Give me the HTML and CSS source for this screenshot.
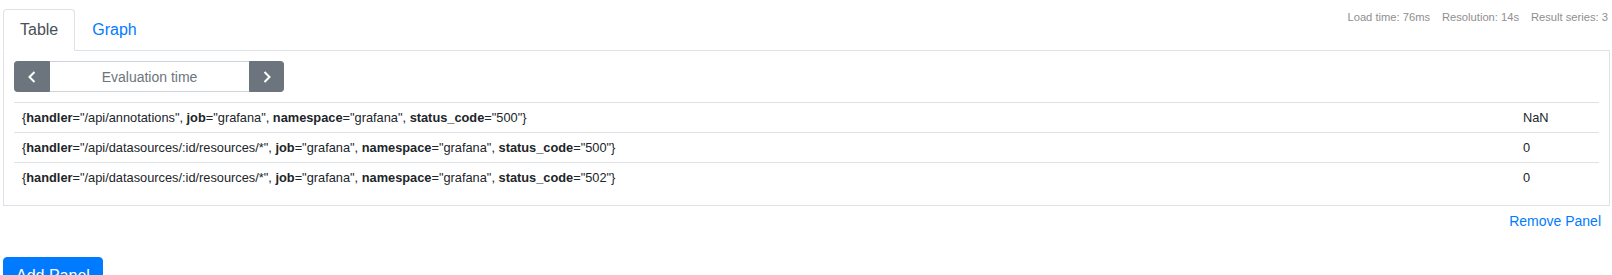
FILE: index.html
```html
<!DOCTYPE html>
<html lang="en">
<head>
    <meta charset="UTF-8" />
    <meta name="viewport" content="width=device-width, initial-scale=1.0"/>
    <title>Prometheus Time Series Collection and Processing Server</title>
    <link rel="stylesheet" href="styles.css">
</head>
<body>
    <div class="page">
        <div class="panel">
            <div class="panel-head">
                <ul class="tabs">
                    <li class="tab active">Table</li>
                    <li class="tab"><a href="#">Graph</a></li>
                </ul>
                <div class="stats">Load time: 76ms &ensp; Resolution: 14s &ensp; Result series: 3</div>
            </div>
            <div class="tab-body">
                <div class="time-input">
                    <button class="step prev" title="Previous">
                        <svg width="8" height="12" viewBox="0 0 8 12"><polyline points="6.5,1 1.5,6 6.5,11" fill="none" stroke="#fff" stroke-width="2"/></svg>
                    </button>
                    <input type="text" placeholder="Evaluation time">
                    <button class="step next" title="Next">
                        <svg width="8" height="12" viewBox="0 0 8 12"><polyline points="1.5,1 6.5,6 1.5,11" fill="none" stroke="#fff" stroke-width="2"/></svg>
                    </button>
                </div>
                <table class="series">
                    <tbody>
                        <tr>
                            <td>{<b>handler</b>="/api/annotations", <b>job</b>="grafana", <b>namespace</b>="grafana", <b>status_code</b>="500"}</td>
                            <td class="value">NaN</td>
                        </tr>
                        <tr>
                            <td>{<b>handler</b>="/api/datasources/:id/resources/*", <b>job</b>="grafana", <b>namespace</b>="grafana", <b>status_code</b>="500"}</td>
                            <td class="value">0</td>
                        </tr>
                        <tr>
                            <td>{<b>handler</b>="/api/datasources/:id/resources/*", <b>job</b>="grafana", <b>namespace</b>="grafana", <b>status_code</b>="502"}</td>
                            <td class="value">0</td>
                        </tr>
                    </tbody>
                </table>
            </div>
            <div class="panel-actions">
                <a href="#">Remove Panel</a>
            </div>
        </div>
        <button class="btn-add">Add Panel</button>
    </div>
</body>
</html>
```

FILE: styles.css
```css
* {
    box-sizing: border-box;
}

body {
    margin: 0;
    font-family: "Liberation Sans", Arial, sans-serif;
    font-size: 16px;
    line-height: 1.5;
    color: #212529;
    background: #fff;
}

a {
    color: #007bff;
    text-decoration: none;
}

.page {
    padding: 9px 2px 0 3px;
}

/* tabs + stats */
.panel-head {
    display: flex;
    justify-content: space-between;
    align-items: flex-start;
    border-bottom: 1px solid #dee2e6;
}

.tabs {
    display: flex;
    list-style: none;
    margin: 0 0 -1px 0;
    padding: 0;
}

.tab {
    padding: 8px 16px;
    line-height: 24px;
    border: 1px solid transparent;
    border-radius: 4px 4px 0 0;
}

.tab.active {
    color: #495057;
    background: #fff;
    border-color: #dee2e6 #dee2e6 #fff;
}

.stats {
    font-size: 11.2px;
    line-height: 17px;
    color: #8f8f8f;
    margin-right: 2px;
}

.tab-body {
    border: 1px solid #dee2e6;
    border-top: none;
    padding: 10px 10px 13px;
}

/* evaluation time */
.time-input {
    display: flex;
    width: 270px;
    height: 31px;
    margin-bottom: 10px;
}

.step {
    display: flex;
    align-items: center;
    justify-content: center;
    width: 36px;
    padding: 0;
    background: #6c757d;
    border: 1px solid #6c757d;
    cursor: pointer;
}

.step.prev {
    border-radius: 3.2px 0 0 3.2px;
}

.step.next {
    width: 35px;
    border-radius: 0 3.2px 3.2px 0;
}

.time-input input {
    flex: 1;
    min-width: 0;
    border: 1px solid #ced4da;
    border-left: none;
    border-right: none;
    font-family: inherit;
    font-size: 14px;
    text-align: center;
    color: #495057;
    padding: 4px 8px;
    outline: none;
}

.time-input input::placeholder {
    color: #6c757d;
}

/* result table */
.series {
    width: 100%;
    border-collapse: collapse;
    font-size: 12.8px;
    line-height: 21px;
}

.series td {
    border-top: 1px solid #dee2e6;
    padding: 4px 8px;
    vertical-align: middle;
}

.series td.value {
    width: 84px;
}

.panel-actions {
    text-align: right;
    font-size: 14px;
    line-height: 21px;
    margin-top: 5px;
    padding-right: 9px;
}

.btn-add {
    margin-top: 25px;
    padding: 6px 12px;
    font-family: inherit;
    font-size: 16px;
    line-height: 24px;
    color: #fff;
    background: #007bff;
    border: 1px solid #007bff;
    border-radius: 4px;
    cursor: pointer;
}
```
